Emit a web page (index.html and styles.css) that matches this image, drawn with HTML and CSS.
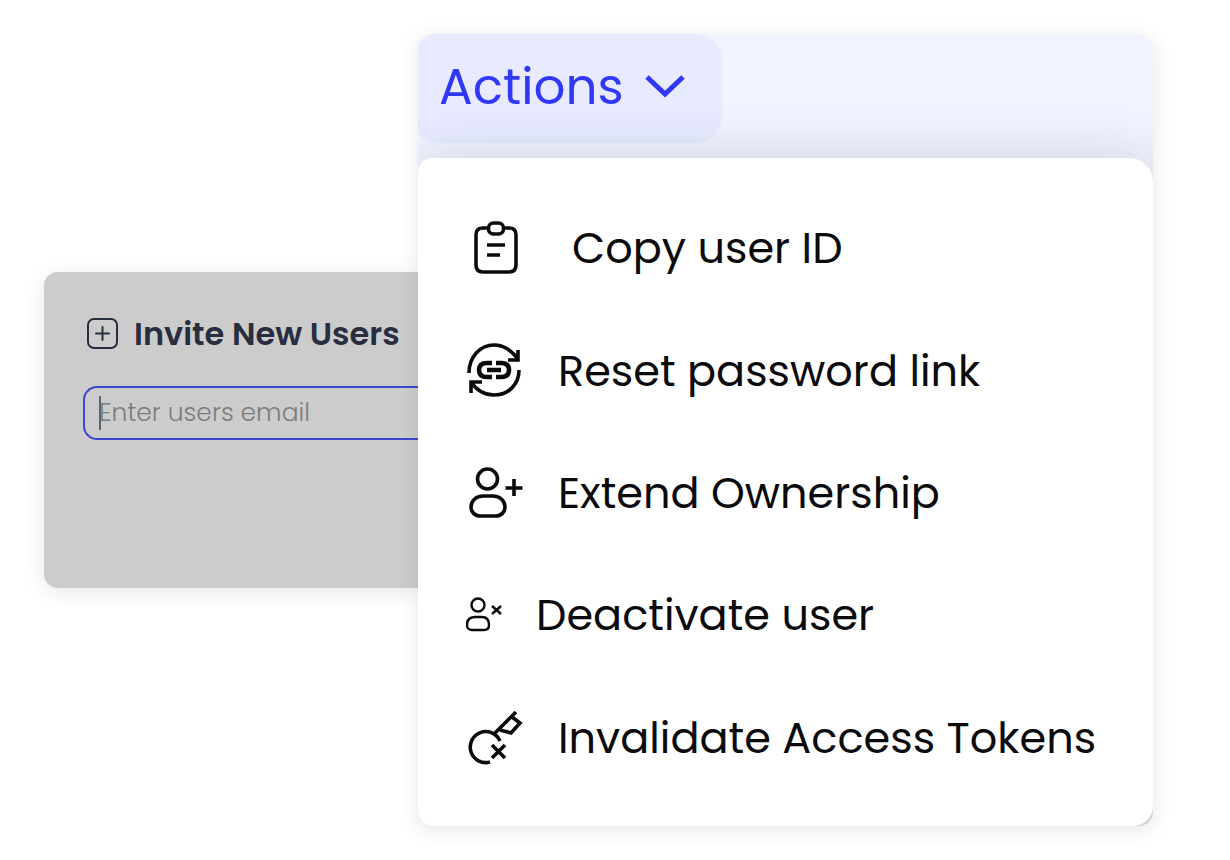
FILE: index.html
```html
<!DOCTYPE html>
<html lang="en">
<head>
<meta charset="utf-8">
<title>User actions</title>
<link rel="stylesheet" href="styles.css">
</head>
<body>
<main class="scene">
  <section class="invite">
    <h2 class="invite-title">
      <svg class="invite-icon" viewBox="0 0 32 32" aria-hidden="true"><rect x="2" y="1" width="29" height="29" rx="6"/><path d="M16.500 9v13M10 15.500h13"/></svg>
      <label for="email">Invite New Users</label>
    </h2>
    <div class="field">
      <span class="caret"></span>
      <input class="email" id="email" type="email" placeholder="Enter users email">
    </div>
  </section>
  <section class="menu">
    <header class="menu-head">
      <button class="trigger" type="button">Actions
        <svg class="chevron" viewBox="0 0 40 24" aria-hidden="true"><path d="M2 2l18 17L38 2"/></svg>
      </button>
    </header>
    <ul class="items">
      <li class="row"><button class="item item-wide" type="button">
        <svg class="icon" viewBox="0 0 58 58" stroke-width="3.600" aria-hidden="true"><path d="M22 9h-5q-7 0-7 7v30q0 7 7 7h26q7 0 7-7V16q0-7-7-7h-5"/><rect x="22.500" y="4" width="15" height="11" rx="5"/><path d="M21 26h18M21 36h13"/></svg>
        Copy user ID</button></li>
      <li class="row"><button class="item" type="button">
        <svg class="icon" viewBox="0 0 58 58" stroke-width="3.600" aria-hidden="true"><path d="M3 31C3 15 14 3 28 3c10 0 18 6 24 14M52 8v10H42M53 28C53 43 42 53 28 53C18 53 11 49 5 40M5 51V40H16"/><path stroke-width="4.500" d="M26 21h-5q-8 0-8 7t8 7h5M30 21h5q8 0 8 7t-8 7h-5M21 28h14"/></svg>
        Reset password link</button></li>
      <li class="row"><button class="item" type="button">
        <svg class="icon" viewBox="0 0 58 58" stroke-width="3.600" aria-hidden="true"><circle cx="21.500" cy="15" r="10"/><path d="M17 32h10c7 0 12 5 12 11 0 5-4 9-9 9H14c-5 0-9-4-9-9 0-6 5-11 12-11zM48 15v17M39.500 24h17"/></svg>
        Extend Ownership</button></li>
      <li class="row"><button class="item" type="button">
        <svg class="icon icon-small" viewBox="0 0 36 36" stroke-width="2.400" aria-hidden="true"><circle cx="12" cy="8" r="6.500"/><path d="M9 20h7c5 0 7 3 7 8 0 3-2 5-5 5H6c-3 0-5-2-5-5 0-5 3-8 8-8zM26 9l9 8M35 9l-9 8"/></svg>
        Deactivate user</button></li>
      <li class="row"><button class="item" type="button">
        <svg class="icon" viewBox="0 0 58 58" stroke-width="3.600" aria-hidden="true"><path d="M24 53A15.500 15.500 0 1 1 34 32M27 26L50 3M46 8l8 6-9 10-11-3M26 36l13 13M39 36L26 49"/></svg>
        Invalidate Access Tokens</button></li>
    </ul>
  </section>
</main>
</body>
</html>
```
FILE: styles.css
```css
* { box-sizing: border-box; }
body {
  margin: 0;
  background: #fff;
  color: #0b0b0d;
  font-family: Poppins, Inter, "Open Sans", sans-serif;
}
button, input { font: inherit; color: inherit; }
svg { flex: none; fill: none; stroke: currentColor; }

.scene {
  display: grid;
  grid-template-columns: 374fr 735fr;
  align-items: center;
  min-height: 100vh;
  padding: 34px 77px 34px 44px;
}

.invite {
  min-width: 0;
  min-height: 316px;
  padding: 40px 0 40px 39px;
  border-radius: 14px 0 0 14px;
  background: #ccc;
  box-shadow: 0 4px 20px rgba(0, 0, 0, .1);
}
.invite-title {
  display: flex;
  align-items: center;
  gap: 16px;
  height: 44px;
  margin: 0 0 30px 3px;
  color: #282d40;
  font-size: 32px;
  font-weight: 600;
  white-space: nowrap;
}
.invite-icon { width: 32px; height: 32px; stroke-width: 2; stroke-linecap: round; }
.field {
  display: flex;
  align-items: center;
  height: 54px;
  padding-left: 14px;
  border: 2px solid #3f48cc;
  border-right: 0;
  border-radius: 14px 0 0 14px;
}
.caret { width: 2px; height: 34px; margin-right: -2px; background: #5f6270; }
.email {
  flex: 1;
  min-width: 0;
  padding: 0;
  border: 0;
  outline: 0;
  background: transparent;
  font-size: 25px;
  font-weight: 300;
}
.email::placeholder { color: #7c7c7c; opacity: 1; }

.menu {
  display: flex;
  flex-direction: column;
  align-self: stretch;
  position: relative;
  overflow: hidden;
  border-radius: 14px;
  background: linear-gradient(#f1f3ff 50%, #e2e3ea 80%);
  box-shadow: 0 4px 20px rgba(0, 0, 0, .1);
}
.menu-head { height: 124px; }
.trigger {
  display: flex;
  align-items: center;
  gap: 21px;
  height: 109px;
  padding: 0 37px 3px 21px;
  border: 0;
  border-radius: 16px 26px 26px 16px;
  background: #e8ebff;
  color: #3038f5;
  font-size: 50px;
}
.chevron { width: 40px; height: 24px; stroke-width: 5; }

.items {
  display: grid;
  flex: 1;
  grid-auto-rows: 1fr;
  position: relative;
  margin: 0;
  padding: 29px 0 27px;
  list-style: none;
  border-radius: 14px 24px 20px 14px;
  background: #fff;
  box-shadow: 0 8px 60px rgba(20, 40, 50, .22);
}
.row { display: flex; }
.item {
  display: flex;
  align-items: center;
  gap: 34px;
  width: 100%;
  padding: 0 0 0 48px;
  border: 0;
  background: transparent;
  font-size: 43px;
  white-space: nowrap;
}
.item-wide { gap: 48px; }
.icon { width: 58px; height: 58px; }
.icon-small { width: 36px; height: 36px; }
```
